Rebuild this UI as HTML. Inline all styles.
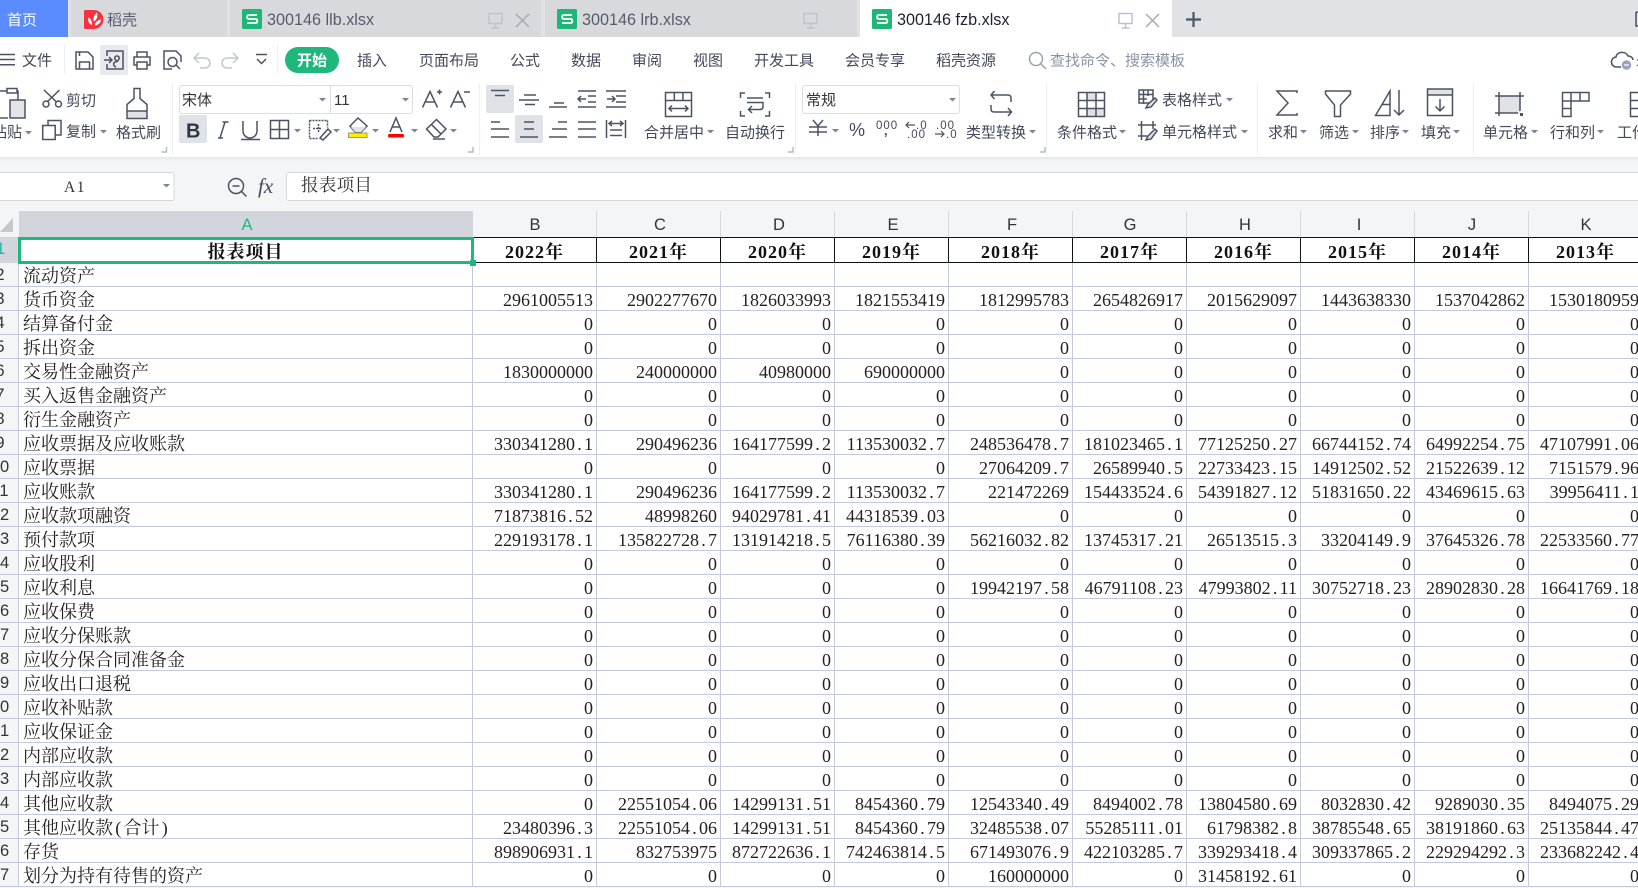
<!DOCTYPE html>
<html lang="zh"><head><meta charset="utf-8"><title>300146 fzb.xlsx</title>
<style>
html,body{margin:0;padding:0;background:#f4f5f7;}
body{width:1638px;height:887px;overflow:hidden;position:relative;}
#grid{position:absolute;left:19px;top:237px;border-collapse:separate;border-spacing:0;table-layout:fixed;width:1623px;background:#fff;font:18px "Liberation Serif","Noto Serif CJK SC",serif;color:#222;}
#grid td{height:24px;box-sizing:border-box;border-right:1px solid #c3cadb;border-bottom:1px solid #c3cadb;padding:3px 3px 0 0;text-align:right;white-space:nowrap;overflow:hidden;line-height:20px;}
#grid td.l{text-align:left;padding:3px 0 0 4px;}
#grid tr.h td{height:26px;text-align:center;font-weight:bold;border-color:#111;border-top:1px solid #111;padding:4px 0 0 0;line-height:20px;color:#111;letter-spacing:1px;}
#grid s{text-decoration:none;padding:0 2.25px;}
#rn{position:absolute;left:-30px;top:263px;width:60px;font:16.5px "Liberation Sans",sans-serif;color:#333;}
#rn p{margin:0;height:24px;box-sizing:border-box;border-bottom:1px solid #c3cadb;text-align:center;line-height:25px;}
#rv{position:absolute;left:18px;top:237px;width:1px;height:650px;background:#c3cadb;}
#r1{position:absolute;left:0;top:237px;width:19px;height:26px;background:#d2d5dc;overflow:hidden;}
#r1 span{position:absolute;left:-4px;top:3px;font:16.5px "Liberation Sans",sans-serif;color:#1fb7a0;}
#sel{position:absolute;left:18px;top:237px;width:456px;height:27px;box-sizing:border-box;border:3px solid #1fb77b;}
#hd{position:absolute;left:470px;top:260px;width:6px;height:6px;background:#1fb77b;}
#ui{position:absolute;left:0;top:0;}
.u{font:15px "Liberation Sans","Noto Sans CJK SC",sans-serif;fill:#434959;}
.tb{font:16.2px "Liberation Sans","Noto Sans CJK SC",sans-serif;fill:#565c6c;}
.ch{font:16.5px "Liberation Sans",sans-serif;fill:#333;}
.se{font:17.6px "Liberation Serif","Noto Serif CJK SC",serif;fill:#333;}
.sm{font:11.5px "Liberation Sans",sans-serif;fill:#434959;letter-spacing:1px;}
.i{fill:none;stroke:#4b5363;stroke-width:1.5;}
.g{fill:none;stroke:#c3c7cf;stroke-width:1.5;}
.m{fill:none;stroke:#bcc3d1;stroke-width:1.5;}
.x{fill:none;stroke:#a3a9b5;stroke-width:1.5;}
.a{fill:#7b8496;stroke:none;}
.sp{stroke:#eceef1;stroke-width:1;}
.f{fill:#e0e2e5;}
.ss{fill:none;stroke:#fff;stroke-width:1.8;}
</style></head><body>

<svg id="ui" width="1638" height="237" viewBox="0 0 1638 237" xmlns="http://www.w3.org/2000/svg">
<defs><linearGradient id="sh" x1="0" y1="0" x2="0" y2="1"><stop offset="0" stop-color="#e4e5e9"/><stop offset="1" stop-color="#f4f5f7"/></linearGradient></defs>
<!-- tab bar -->
<rect x="0" y="0" width="1638" height="37" fill="#e1e2e6"/>
<rect x="0" y="0" width="68" height="37" fill="#5b8cff"/>
<rect x="71" y="0" width="156" height="37" fill="#d8d9dd"/>
<rect x="230" y="0" width="311" height="37" fill="#d8d9dd"/>
<rect x="545" y="0" width="312" height="37" fill="#d8d9dd"/>
<rect x="860" y="0" width="312" height="37" fill="#fff"/>
<rect x="0" y="37" width="1638" height="120" fill="#fff"/>
<rect x="0" y="157" width="1638" height="4" fill="url(#sh)"/>
<text x="7" y="25" class="u" style="fill:#fff">首页</text>
<path d="M85.500 10h8.500a9.500 9.500 0 0 1 0 19h-8.500q-1.500 0-1.500-1.500v-16q0-1.500 1.500-1.500z" fill="#f5333f"/>
<path d="M92 25c-3-1-4.500-4-3.500-7.500 2.500 1.500 4 4.500 3.500 7.500zM94 21.500c-1.500-3 0-6.500 3-9 1 3.500 0 7-3 9zM95 25.500c0-3 2.500-5.500 6-6 0 3-2.500 5.500-6 6z" fill="#fff"/>
<text x="107" y="25" class="tb" style="font-size:15px">稻壳</text>
<rect x="242" y="9" width="20" height="20" rx="1.500" fill="#1fb777"/><path class="ss" d="M257 15h-8q-1.800 0-1.800 1.800v.4q0 1.800 1.800 1.800h6.500q1.800 0 1.800 1.800v.4q0 1.800-1.800 1.800h-8.500"/>
<text x="267" y="25" class="tb">300146 llb.xlsx</text>
<path class="m" d="M489 13.500h13v10h-13zM495.500 23.500v4M491.500 28h8"/>
<path class="x" d="M516 14l13 13M529 14l-13 13"/>
<rect x="557" y="9" width="20" height="20" rx="1.500" fill="#1fb777"/><path class="ss" d="M572 15h-8q-1.800 0-1.800 1.800v.4q0 1.800 1.800 1.800h6.500q1.800 0 1.800 1.800v.4q0 1.800-1.800 1.800h-8.500"/>
<text x="582" y="25" class="tb">300146 lrb.xlsx</text>
<path class="m" d="M804 13.500h13v10h-13zM810.500 23.500v4M806.500 28h8"/>
<rect x="872" y="9" width="20" height="20" rx="1.500" fill="#1fb777"/><path class="ss" d="M887 15h-8q-1.800 0-1.800 1.800v.4q0 1.800 1.800 1.800h6.500q1.800 0 1.800 1.800v.4q0 1.800-1.800 1.800h-8.500"/>
<text x="897" y="25" class="tb" style="fill:#1f2330">300146 fzb.xlsx</text>
<path class="m" d="M1119 13.500h13v10h-13zM1125.500 23.500v4M1121.500 28h8"/>
<path class="x" d="M1146 14l13 13M1159 14l-13 13"/>
<path d="M1193.500 12v15M1186 19.500h15" fill="none" stroke="#4b5568" stroke-width="2.200"/>
<path class="i" d="M1636 12h2M1636 12v14h2"/>

<!-- quick bar -->
<path class="i" d="M0 54.500h15M0 59.500h15M0 64.700h15"/>
<text x="22" y="65.500" class="u">文件</text>
<line x1="64.500" y1="45" x2="64.500" y2="74" class="sp"/>
<path class="i" d="M76 52h12l5 5v12h-17zM79.500 69v-7h10v7M79.500 52v4"/>
<rect x="100" y="45" width="28" height="30" rx="2" fill="#e8eaed"/>
<path class="i" d="M107 56v-5h16v18h-16v-5M104 60h8M109 57l3 3-3 3M116 67c-3-1-3-4-1-5 2 0 3-1 4-3 1-3-3-4-4-2-1 2 1 4 3 4"/>
<path class="i" d="M137 57v-5h10v5M137 65h-3v-8h16v8h-3M137 62h10v7h-10z"/>
<path class="i" d="M172 69h-8v-18h12l5 5v6"/><circle class="i" cx="172.500" cy="62" r="4.500"/><path class="i" d="M176 65l4 4"/>
<path class="g" d="M199 53l-5 5 5 5M194 58h11a5 5 0 0 1 0 10h-5"/>
<path class="g" d="M233 53l5 5-5 5M238 58h-11a5 5 0 0 0 0 10h5"/>
<path class="i" d="M256 54.500h11M257 59l4.500 4.500 4.500-4.500"/>
<line x1="277.500" y1="45" x2="277.500" y2="74" class="sp"/>
<rect x="285" y="47" width="54" height="26" rx="13" fill="#1fb77b"/>
<text x="297" y="65.500" class="u" style="fill:#fff;font-weight:bold">开始</text>
<text x="357" y="65.500" class="u">插入</text>
<text x="419" y="65.500" class="u">页面布局</text>
<text x="510" y="65.500" class="u">公式</text>
<text x="571" y="65.500" class="u">数据</text>
<text x="632" y="65.500" class="u">审阅</text>
<text x="693" y="65.500" class="u">视图</text>
<text x="754" y="65.500" class="u">开发工具</text>
<text x="845" y="65.500" class="u">会员专享</text>
<text x="936" y="65.500" class="u">稻壳资源</text>
<circle cx="1036" cy="59" r="6.500" fill="none" stroke="#9aa2b1" stroke-width="1.500"/><path d="M1041 64l5 5" fill="none" stroke="#9aa2b1" stroke-width="1.500"/>
<text x="1050" y="65.500" class="u" style="fill:#8a93a5">查找命令、搜索模板</text>
<path class="i" d="M1621 67h-4a5 5 0 0 1-1-10c1-6 10-6 12-1 3 0 5 2 5 4"/>
<circle cx="1626.500" cy="65" r="4.800" fill="#9aa5bb"/><path d="M1624 65h5" stroke="#fff" stroke-width="1.200"/>
<text x="1636" y="65.500" class="u">未</text>

<!-- clipboard -->
<path class="i" d="M7 91h-9v27h10"/><path class="i" d="M7 88.500h10v4.500h-10zM17 91h1v9"/>
<rect x="10" y="100" width="15" height="18" class="i" style="fill:#e2e4e8"/>
<circle class="i" cx="46" cy="104" r="3"/><circle class="i" cx="58.500" cy="104" r="3"/>
<path class="i" d="M44 90l12.500 12M59.500 90l-12.500 12"/>
<text x="66" y="105.500" class="u">剪切</text>
<text x="-8" y="137" class="u">粘贴</text><path class="a" d="M25 131h7l-3.500 3.500z"/>
<rect x="48" y="120.500" width="13" height="14.500" class="i"/><rect x="42.700" y="125.500" width="12.500" height="14" class="i" style="fill:#fff"/>
<text x="66" y="136.500" class="u">复制</text><path class="a" d="M100 130h7l-3.500 3.500z"/>
<rect x="127.500" y="111" width="19" height="7.500" class="f"/>
<path class="i" d="M134 88.500h6v10l7 6v14h-20v-14l7-6z"/><path class="i" d="M127 111h20"/>
<text x="116" y="137.500" class="u">格式刷</text>
<path d="M161.500 152h5v-5" fill="none" stroke="#b8bcc5" stroke-width="1.500"/>
<line x1="172.500" y1="84" x2="172.500" y2="155" class="sp"/>

<!-- font -->
<rect x="179.500" y="85.500" width="233" height="28" rx="2" fill="#fff" stroke="#dcdee2"/>
<line x1="330.500" y1="86" x2="330.500" y2="113" stroke="#dcdee2"/>
<text x="182" y="105" class="u" style="fill:#333">宋体</text>
<path class="a" d="M319 98h7l-3.500 3.500z"/>
<text x="334" y="105" class="u" style="fill:#333">11</text>
<path class="a" d="M402 98h7l-3.500 3.500z"/>
<path class="i" d="M422.500 107.500l7.500-16 7.500 16M425 102h10M437 92h5M439.500 89.500v5"/>
<path class="i" d="M450.500 107.500l7.500-16 7.500 16M453 102h10M464 92h6"/>
<rect x="179" y="115" width="28" height="28" rx="2" fill="#dfe2e6"/>
<text x="186" y="137.500" style="font:bold 20px 'Liberation Sans',sans-serif;fill:#2f3644">B</text>
<path class="i" d="M225 122l-5 16M222.500 122h6M218 138h5"/>
<path class="i" d="M243 121v10a7 7 0 0 0 14 0v-10M241 139.500h19"/>
<rect x="270.500" y="120.500" width="18" height="18" class="i"/><path class="i" d="M279.500 120.500v18M270.500 129.500h18"/>
<path class="a" d="M294 129h7l-3.500 3.500z"/>
<path class="i" d="M309.500 120.500h18v7M309.500 120.500v18h9M318.500 124v9M313 128.500h8" stroke-dasharray="2 1"/><path class="i" d="M320 138l8-9 3 3-8 8z"/>
<path class="a" d="M333 129h7l-3.500 3.500z"/>
<path class="i" d="M350 126l8-8 9 8-6 6h-6z"/><path class="f" d="M351 127h15l-5 5h-6z"/>
<rect x="348.500" y="133" width="18.500" height="4.500" fill="#ffee00" stroke="#9b9b70"/>
<path class="a" d="M372 129h7l-3.500 3.500z"/>
<path class="i" d="M390 132l6-14 6 14M392.500 127h7"/>
<rect x="388" y="134" width="16" height="3.500" rx="1.500" fill="#f00"/>
<path class="a" d="M411 129h7l-3.500 3.500z"/>
<path class="i" d="M426.500 129l10-9.500 9.500 9.500-8 8h-4zM431.500 124.500l9.500 9.500M433 139h12"/>
<path class="a" d="M450 129h7l-3.500 3.500z"/>
<path d="M468 152h5v-5" fill="none" stroke="#b8bcc5" stroke-width="1.500"/>
<line x1="479.500" y1="84" x2="479.500" y2="155" class="sp"/>

<!-- align -->
<rect x="486" y="85" width="28" height="28" rx="2" fill="#dfe2e6"/>
<path class="i" d="M491 90.500h18M495 95.500h10"/>
<path class="i" d="M524 95h12M519 100h20M525 104.500h10"/>
<path class="i" d="M554 103h10M549 107h18"/>
<path class="i" d="M578 91h18M588 96h8M588 102h8M578 107h18M586 99h-8M581 96l-3 3 3 3"/>
<path class="i" d="M606 91h20M616 96h10M616 102h10M606 107h20M607 99h8M612 96l3 3-3 3"/>
<path class="i" d="M491 122h9M491 129h18M491 137h18"/>
<rect x="515" y="115" width="28" height="28" rx="2" fill="#dfe2e6"/>
<path class="i" d="M524 122h10M524 129h10M520 137h18"/>
<path class="i" d="M558 122h9M552 129h15M549 137h18"/>
<path class="i" d="M578 122h18M578 129h18M578 137h18"/>
<path class="i" d="M606.500 120v18M625.500 120v18M609 123.500h14M612 121l-3 2.500 3 2.500M620 121l3 2.500-3 2.500M610 130h12M610 135.500h12"/>
<rect x="665.500" y="92.500" width="26" height="24" class="i"/><path class="i" d="M665.500 100.500h26M674.300 92.500v8M682.900 92.500v8M669 108.500h19M672 105.500l-3 3 3 3M685 105.500l3 3-3 3"/>
<text x="644" y="137.500" class="u">合并居中</text><path class="a" d="M707 130h7l-3.500 3.500z"/>
<path class="i" d="M745 93h-4.500v5M765 93h4.500v5M740.500 111v5h4.500M769.500 111v5h-4.500M747 98h16M747 102.500h16v4c0 2-1 3-3 3h-11M752 106l-3.500 3.500 3.500 3.500"/>
<text x="725" y="137.500" class="u">自动换行</text>
<path d="M788 152h5v-5" fill="none" stroke="#b8bcc5" stroke-width="1.500"/>
<line x1="795.500" y1="84" x2="795.500" y2="155" class="sp"/>

<!-- number -->
<rect x="802.500" y="85.500" width="157" height="28" rx="2" fill="#fff" stroke="#dcdee2"/>
<text x="806" y="105" class="u" style="fill:#333">常规</text>
<path class="a" d="M949 98h7l-3.500 3.500z"/>
<path class="i" d="M813 120l5 6 5-6M809 127h18M809 132h18M818 126v10"/>
<path class="a" d="M832 129h7l-3.500 3.500z"/>
<text x="849" y="136" style="font:18px 'Liberation Sans',sans-serif;fill:#434959">%</text>
<text x="876" y="129" class="sm">000</text><text x="884" y="135" style="font:bold 13px 'Liberation Sans',sans-serif;fill:#434959">,</text>
<path class="i" style="stroke-width:1.200" d="M915 125h-9M909 122l-3 3 3 3"/><text x="916" y="129" class="sm">.0</text><text x="907" y="138" class="sm">.00</text>
<text x="936" y="129" class="sm">.00</text><path class="i" style="stroke-width:1.200" d="M935 134h9M941 131l3 3-3 3"/><text x="946" y="138" class="sm">.0</text>
<path class="i" d="M991 95h17q3 0 3 3v4M994.500 91l-3.500 4 3.500 4M1011 112h-17q-3 0-3-3v-4M1008 108l3.500 4-3.500 4"/>
<text x="966" y="137.500" class="u">类型转换</text><path class="a" d="M1029 130h7l-3.500 3.500z"/>
<path d="M1040 152h5v-5" fill="none" stroke="#b8bcc5" stroke-width="1.500"/>
<line x1="1046.500" y1="84" x2="1046.500" y2="155" class="sp"/>

<!-- styles -->
<g transform="translate(-1,0)">
<rect x="1088" y="92.500" width="9" height="8" class="f"/><rect x="1088" y="108" width="18" height="8" class="f"/>
<rect x="1079.500" y="92.500" width="26" height="24" class="i"/><path class="i" d="M1079.500 100.500h26M1079.500 108.500h26M1088 92.500v24M1097 92.500v24"/>
</g>
<text x="1057" y="137.500" class="u">条件格式</text><path class="a" d="M1119 130h7l-3.500 3.500z"/>
<path class="i" d="M1139 90h14v13h-14zM1139 94.500h14M1139 99h8M1143.500 90v14M1148 90v6"/><path class="i" d="M1146 108l2-4 7-6 2 2-6 7z" style="fill:#e0e2e5"/>
<text x="1162" y="105" class="u">表格样式</text><path class="a" d="M1226 98h7l-3.500 3.500z"/>
<path class="i" d="M1138 125h18M1138 136h9M1141.500 121v19M1153 121v8"/><path class="i" d="M1146 140l2-4 7-7 2 2-6 8z" style="fill:#e0e2e5"/>
<text x="1162" y="137" class="u">单元格样式</text><path class="a" d="M1241 130h7l-3.500 3.500z"/>
<line x1="1257.500" y1="84" x2="1257.500" y2="155" class="sp"/>

<!-- edit -->
<g transform="translate(-1,0)">
<path class="i" d="M1298 93v-2h-20l11 12-11 12h20v-2"/>
<path class="i" d="M1326.500 91h25v3l-10 11v11.500h-6v-11.500l-9-11z"/>
<path class="i" d="M1376.500 115.500l14.500-24.500v24.500zM1383 104.500h8M1400 90v25M1395 110l5 5 5-5"/>
</g>
<text x="1268" y="137.500" class="u">求和</text><path class="a" d="M1300 130h7l-3.500 3.500z"/>
<text x="1319" y="137.500" class="u">筛选</text><path class="a" d="M1352 130h7l-3.500 3.500z"/>
<text x="1370" y="137.500" class="u">排序</text><path class="a" d="M1402 130h7l-3.500 3.500z"/>
<g transform="translate(-2,-1)">
<rect x="1429.500" y="90.500" width="24.500" height="5" class="f"/>
<rect x="1429.500" y="90" width="25" height="26.500" class="i"/><path class="i" d="M1429.500 96h25M1442 100v12M1437.500 107.500l4.500 4.500 4.500-4.500"/>
</g>
<text x="1421" y="137.500" class="u">填充</text><path class="a" d="M1453 130h7l-3.500 3.500z"/>
<line x1="1473.500" y1="84" x2="1473.500" y2="155" class="sp"/>

<!-- cells -->
<g transform="translate(-2,0)">
<rect x="1501" y="96" width="21" height="17" class="f"/>
<path class="i" d="M1497 96h29M1497 113h23M1501 92v24M1522 92v19"/><rect x="1522" y="113" width="3" height="3" fill="#4b5363"/>
<path class="i" d="M1564.500 92.500h26.500v8.500h-18v15.500h-8.500zM1564.500 101h8.500M1573 92.500v8.500M1582 92.500v8.500M1564.500 108.500h8.500"/>
</g>
<text x="1483" y="137.500" class="u">单元格</text><path class="a" d="M1531 130h7l-3.500 3.500z"/>
<text x="1550" y="137.500" class="u">行和列</text><path class="a" d="M1597 130h7l-3.500 3.500z"/>
<path class="i" d="M1640 92.500h-9.500v24h9.500M1630.500 100.500h9M1630.500 108.500h9"/>
<text x="1617" y="137.500" class="u">工作表</text>

<!-- formula bar -->
<rect x="-2" y="172.500" width="176" height="28" rx="2" fill="#fff" stroke="#d6d8dd"/>
<text x="64" y="192" class="se" style="font-size:15.5px;letter-spacing:1.5px">A1</text>
<path class="a" d="M163 184h7l-3.500 3.500z"/>
<circle class="i" cx="236" cy="186" r="7.500"/><path class="i" d="M241.500 191.500l5 5M232.500 186h7"/>
<text x="258" y="193" style="font:italic 21px 'Liberation Serif',serif;fill:#434959">fx</text>
<rect x="286.500" y="172.500" width="1360" height="28" rx="2" fill="#fff" stroke="#d6d8dd"/>
<text x="301" y="191" class="se" style="letter-spacing:.2px">报表项目</text>

<!-- column headers -->
<path d="M0 232L13 218V232z" fill="#c4c7cc"/>
<rect x="19" y="211" width="454" height="26" fill="#d2d5dc"/>
<path d="M596.500 211v26M720.500 211v26M834.500 211v26M948.500 211v26M1072.500 211v26M1186.500 211v26M1300.500 211v26M1414.500 211v26M1528.500 211v26" stroke="#d5d8de"/>
<text x="247" y="230" text-anchor="middle" class="ch" style="fill:#1fb77b">A</text>
<text x="535" y="230" text-anchor="middle" class="ch">B</text>
<text x="660" y="230" text-anchor="middle" class="ch">C</text>
<text x="779" y="230" text-anchor="middle" class="ch">D</text>
<text x="893" y="230" text-anchor="middle" class="ch">E</text>
<text x="1012" y="230" text-anchor="middle" class="ch">F</text>
<text x="1130" y="230" text-anchor="middle" class="ch">G</text>
<text x="1245" y="230" text-anchor="middle" class="ch">H</text>
<text x="1359" y="230" text-anchor="middle" class="ch">I</text>
<text x="1472" y="230" text-anchor="middle" class="ch">J</text>
<text x="1586" y="230" text-anchor="middle" class="ch">K</text>
</svg>

<div id="rn"><p>2</p><p>3</p><p>4</p><p>5</p><p>6</p><p>7</p><p>8</p><p>9</p><p>10</p><p>11</p><p>12</p><p>13</p><p>14</p><p>15</p><p>16</p><p>17</p><p>18</p><p>19</p><p>20</p><p>21</p><p>22</p><p>23</p><p>24</p><p>25</p><p>26</p><p>27</p></div>
<div id="r1"><span>1</span></div>
<div id="rv"></div>

<table id="grid">
<colgroup><col style="width:454px"><col style="width:124px"><col style="width:124px"><col style="width:114px"><col style="width:114px"><col style="width:124px"><col style="width:114px"><col style="width:114px"><col style="width:114px"><col style="width:114px"><col style="width:114px"></colgroup>
<tr class="h"><td>报表项目</td><td>2022年</td><td>2021年</td><td>2020年</td><td>2019年</td><td>2018年</td><td>2017年</td><td>2016年</td><td>2015年</td><td>2014年</td><td>2013年</td></tr>
<tr><td class="l">流动资产</td><td></td><td></td><td></td><td></td><td></td><td></td><td></td><td></td><td></td><td></td></tr>
<tr><td class="l">货币资金</td><td>2961005513</td><td>2902277670</td><td>1826033993</td><td>1821553419</td><td>1812995783</td><td>2654826917</td><td>2015629097</td><td>1443638330</td><td>1537042862</td><td>1530180959</td></tr>
<tr><td class="l">结算备付金</td><td>0</td><td>0</td><td>0</td><td>0</td><td>0</td><td>0</td><td>0</td><td>0</td><td>0</td><td>0</td></tr>
<tr><td class="l">拆出资金</td><td>0</td><td>0</td><td>0</td><td>0</td><td>0</td><td>0</td><td>0</td><td>0</td><td>0</td><td>0</td></tr>
<tr><td class="l">交易性金融资产</td><td>1830000000</td><td>240000000</td><td>40980000</td><td>690000000</td><td>0</td><td>0</td><td>0</td><td>0</td><td>0</td><td>0</td></tr>
<tr><td class="l">买入返售金融资产</td><td>0</td><td>0</td><td>0</td><td>0</td><td>0</td><td>0</td><td>0</td><td>0</td><td>0</td><td>0</td></tr>
<tr><td class="l">衍生金融资产</td><td>0</td><td>0</td><td>0</td><td>0</td><td>0</td><td>0</td><td>0</td><td>0</td><td>0</td><td>0</td></tr>
<tr><td class="l">应收票据及应收账款</td><td>330341280<s>.</s>1</td><td>290496236</td><td>164177599<s>.</s>2</td><td>113530032<s>.</s>7</td><td>248536478<s>.</s>7</td><td>181023465<s>.</s>1</td><td>77125250<s>.</s>27</td><td>66744152<s>.</s>74</td><td>64992254<s>.</s>75</td><td>47107991<s>.</s>06</td></tr>
<tr><td class="l">应收票据</td><td>0</td><td>0</td><td>0</td><td>0</td><td>27064209<s>.</s>7</td><td>26589940<s>.</s>5</td><td>22733423<s>.</s>15</td><td>14912502<s>.</s>52</td><td>21522639<s>.</s>12</td><td>7151579<s>.</s>96</td></tr>
<tr><td class="l">应收账款</td><td>330341280<s>.</s>1</td><td>290496236</td><td>164177599<s>.</s>2</td><td>113530032<s>.</s>7</td><td>221472269</td><td>154433524<s>.</s>6</td><td>54391827<s>.</s>12</td><td>51831650<s>.</s>22</td><td>43469615<s>.</s>63</td><td>39956411<s>.</s>1</td></tr>
<tr><td class="l">应收款项融资</td><td>71873816<s>.</s>52</td><td>48998260</td><td>94029781<s>.</s>41</td><td>44318539<s>.</s>03</td><td>0</td><td>0</td><td>0</td><td>0</td><td>0</td><td>0</td></tr>
<tr><td class="l">预付款项</td><td>229193178<s>.</s>1</td><td>135822728<s>.</s>7</td><td>131914218<s>.</s>5</td><td>76116380<s>.</s>39</td><td>56216032<s>.</s>82</td><td>13745317<s>.</s>21</td><td>26513515<s>.</s>3</td><td>33204149<s>.</s>9</td><td>37645326<s>.</s>78</td><td>22533560<s>.</s>77</td></tr>
<tr><td class="l">应收股利</td><td>0</td><td>0</td><td>0</td><td>0</td><td>0</td><td>0</td><td>0</td><td>0</td><td>0</td><td>0</td></tr>
<tr><td class="l">应收利息</td><td>0</td><td>0</td><td>0</td><td>0</td><td>19942197<s>.</s>58</td><td>46791108<s>.</s>23</td><td>47993802<s>.</s>11</td><td>30752718<s>.</s>23</td><td>28902830<s>.</s>28</td><td>16641769<s>.</s>18</td></tr>
<tr><td class="l">应收保费</td><td>0</td><td>0</td><td>0</td><td>0</td><td>0</td><td>0</td><td>0</td><td>0</td><td>0</td><td>0</td></tr>
<tr><td class="l">应收分保账款</td><td>0</td><td>0</td><td>0</td><td>0</td><td>0</td><td>0</td><td>0</td><td>0</td><td>0</td><td>0</td></tr>
<tr><td class="l">应收分保合同准备金</td><td>0</td><td>0</td><td>0</td><td>0</td><td>0</td><td>0</td><td>0</td><td>0</td><td>0</td><td>0</td></tr>
<tr><td class="l">应收出口退税</td><td>0</td><td>0</td><td>0</td><td>0</td><td>0</td><td>0</td><td>0</td><td>0</td><td>0</td><td>0</td></tr>
<tr><td class="l">应收补贴款</td><td>0</td><td>0</td><td>0</td><td>0</td><td>0</td><td>0</td><td>0</td><td>0</td><td>0</td><td>0</td></tr>
<tr><td class="l">应收保证金</td><td>0</td><td>0</td><td>0</td><td>0</td><td>0</td><td>0</td><td>0</td><td>0</td><td>0</td><td>0</td></tr>
<tr><td class="l">内部应收款</td><td>0</td><td>0</td><td>0</td><td>0</td><td>0</td><td>0</td><td>0</td><td>0</td><td>0</td><td>0</td></tr>
<tr><td class="l">内部应收款</td><td>0</td><td>0</td><td>0</td><td>0</td><td>0</td><td>0</td><td>0</td><td>0</td><td>0</td><td>0</td></tr>
<tr><td class="l">其他应收款</td><td>0</td><td>22551054<s>.</s>06</td><td>14299131<s>.</s>51</td><td>8454360<s>.</s>79</td><td>12543340<s>.</s>49</td><td>8494002<s>.</s>78</td><td>13804580<s>.</s>69</td><td>8032830<s>.</s>42</td><td>9289030<s>.</s>35</td><td>8494075<s>.</s>29</td></tr>
<tr><td class="l">其他应收款<s>(</s>合计<s>)</s></td><td>23480396<s>.</s>3</td><td>22551054<s>.</s>06</td><td>14299131<s>.</s>51</td><td>8454360<s>.</s>79</td><td>32485538<s>.</s>07</td><td>55285111<s>.</s>01</td><td>61798382<s>.</s>8</td><td>38785548<s>.</s>65</td><td>38191860<s>.</s>63</td><td>25135844<s>.</s>47</td></tr>
<tr><td class="l">存货</td><td>898906931<s>.</s>1</td><td>832753975</td><td>872722636<s>.</s>1</td><td>742463814<s>.</s>5</td><td>671493076<s>.</s>9</td><td>422103285<s>.</s>7</td><td>339293418<s>.</s>4</td><td>309337865<s>.</s>2</td><td>229294292<s>.</s>3</td><td>233682242<s>.</s>4</td></tr>
<tr><td class="l">划分为持有待售的资产</td><td>0</td><td>0</td><td>0</td><td>0</td><td>160000000</td><td>0</td><td>31458192<s>.</s>61</td><td>0</td><td>0</td><td>0</td></tr>
</table>
<div id="sel"></div><div id="hd"></div>
</body></html>
